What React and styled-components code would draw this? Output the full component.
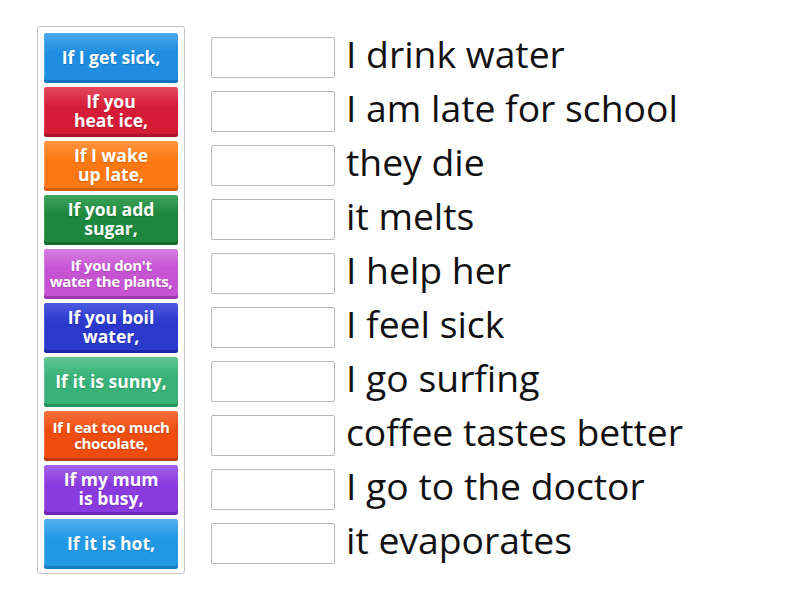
import React from "react";
import styled, { createGlobalStyle } from "styled-components";

const GlobalStyle = createGlobalStyle`
  body {
    margin: 0;
    background: #fff;
    font-family: "Open Sans", "Liberation Sans", sans-serif;
  }
`;

const Page = styled.div`
  display: flex;
  align-items: flex-start;
  padding: 26px 0 0 37px;
`;

const Tray = styled.div`
  display: flex;
  flex-direction: column;
  gap: 4px;
  width: 134px;
  padding: 6px 6px 4px 6px;
  border: 1px solid #c4c4c4;
  border-radius: 3px;
  background: #fff;
`;

const Tile = styled.div`
  height: 50px;
  box-sizing: border-box;
  display: flex;
  align-items: center;
  justify-content: center;
  text-align: center;
  padding: 0 0 2px;
  border-radius: 3px;
  color: #fff;
  font-weight: 700;
  white-space: nowrap;
  font-size: ${p => (p.small ? "15px" : "17.5px")};
  line-height: ${p => (p.small ? "16.5px" : "19px")};
  letter-spacing: ${p => (p.small ? "-0.35px" : "0")};
  background: linear-gradient(${p => p.light}, ${p => p.base} 40%, ${p => p.base});
  box-shadow: inset 0 -3px 0 ${p => p.dark}, inset 1px 1px 0 ${p => p.light};
  text-shadow: 0 1px 1px rgba(0, 0, 0, 0.15);
`;

const Answers = styled.div`
  display: flex;
  flex-direction: column;
  gap: 4px;
  margin: 6px 0 0 26px;
`;

const Row = styled.div`
  height: 50px;
  display: flex;
  align-items: center;
  gap: 11px;
`;

const Slot = styled.div`
  width: 124px;
  height: 41px;
  box-sizing: border-box;
  border: 1px solid #b8b8b8;
  border-radius: 2px;
  background: #fff;
  flex-shrink: 0;
`;

const Phrase = styled.span`
  font-size: 37.3px;
  line-height: 44px;
  color: #111;
  white-space: nowrap;
  position: relative;
  top: -3px;
`;

const tiles = [
  { lines: ["If I get sick,"], base: "#1f8ee0", light: "#4aa8ef", dark: "#1670c0" },
  { lines: ["If you", "heat ice,"], base: "#d51c37", light: "#e34a5e", dark: "#a8142a" },
  { lines: ["If I wake", "up late,"], base: "#fb7812", light: "#fd9440", dark: "#d35e05" },
  { lines: ["If you add", "sugar,"], base: "#1d873d", light: "#3ea55a", dark: "#146a2e" },
  { lines: ["If you don't", "water the plants,"], base: "#c653d2", light: "#d77ee0", dark: "#a035ad", small: true },
  { lines: ["If you boil", "water,"], base: "#2a38cc", light: "#4c5ae0", dark: "#1d27a5" },
  { lines: ["If it is sunny,"], base: "#38b278", light: "#5fc693", dark: "#27915e" },
  { lines: ["If I eat too much", "chocolate,"], base: "#ef4c0f", light: "#f56f3c", dark: "#c23a06", small: true },
  { lines: ["If my mum", "is busy,"], base: "#8a3bdf", light: "#a462ea", dark: "#6b24b8" },
  { lines: ["If it is hot,"], base: "#2399e6", light: "#4fb0f0", dark: "#177bc4" },
];

const phrases = [
  "I drink water",
  "I am late for school",
  "they die",
  "it melts",
  "I help her",
  "I feel sick",
  "I go surfing",
  "coffee tastes better",
  "I go to the doctor",
  "it evaporates",
];

export default function App() {
  return (
    <>
      <GlobalStyle />
      <Page>
        <Tray>
          {tiles.map(t => (
            <Tile key={t.lines.join(" ")} base={t.base} light={t.light} dark={t.dark} small={t.small}>
              <span>
                {t.lines.map((l, i) => (
                  <React.Fragment key={l}>
                    {i > 0 && <br />}
                    {l}
                  </React.Fragment>
                ))}
              </span>
            </Tile>
          ))}
        </Tray>
        <Answers>
          {phrases.map(p => (
            <Row key={p}>
              <Slot />
              <Phrase>{p}</Phrase>
            </Row>
          ))}
        </Answers>
      </Page>
    </>
  );
}
